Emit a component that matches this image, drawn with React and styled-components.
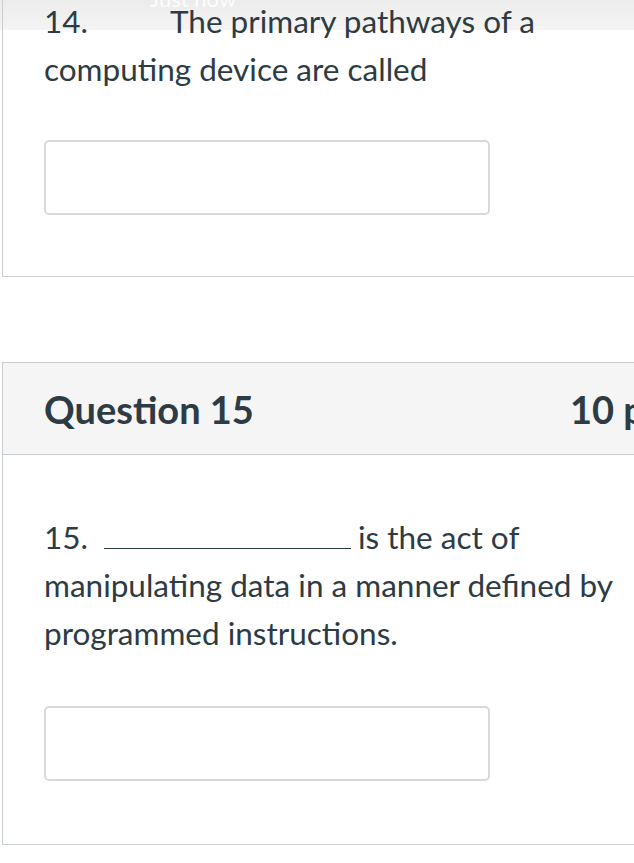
import React from 'react';
import styled, { createGlobalStyle } from 'styled-components';

const GlobalStyle = createGlobalStyle`
    html, body {
        margin: 0;
        padding: 0;
        background: #ffffff;
        overflow: hidden;
    }
    body {
        font-family: Lato, "Noto Sans", "Liberation Sans", sans-serif;
        color: #2d3b45;
    }
`;

const Page = styled.div`
    width: 634px;
    height: 863px;
    overflow: hidden;
    position: relative;
`;

const TopShade = styled.div`
    position: absolute;
    left: 0;
    right: 0;
    top: 0;
    height: 30px;
    background: linear-gradient(#ececec, #f4f4f4);
    z-index: 0;
`;

const Toast = styled.div`
    position: absolute;
    top: -15px;
    left: 150px;
    font-size: 22px;
    color: rgba(255, 255, 255, 0.85);
    z-index: 2;
`;

const Card = styled.div`
    position: relative;
    z-index: 1;
    width: 720px;
    margin-left: 2px;
    border-left: 1px solid #c7cdd1;
    border-bottom: 1px solid #c7cdd1;
    border-top: ${p => (p.$cut ? 'none' : '1px solid #c7cdd1')};
    margin-top: ${p => p.$gap || 0}px;
    background: ${p => (p.$cut ? 'transparent' : '#fff')};
`;

const Header = styled.div`
    height: 91px;
    background: #f5f5f5;
    border-bottom: 1px solid #c7cdd1;
    display: flex;
    align-items: center;
    justify-content: space-between;
    padding: 0 0 0 41px;
`;

const Title = styled.h2`
    margin: 0;
    font-size: 38px;
    font-weight: 700;
    color: #2d3b45;
`;

const Points = styled.span`
    font-size: 38px;
    font-weight: 700;
    color: #2d3b45;
    width: 153px;
`;

const Body = styled.div`
    padding: ${p => p.$top || 0}px 0 0 41px;
    height: ${p => p.$h}px;
    box-sizing: border-box;
`;

const Text = styled.p`
    margin: ${p => p.$mt || 0}px 0 0 0;
    font-size: 31.5px;
    line-height: 48px;
    width: 590px;
    color: #2d3b45;
`;

const Spacer = styled.span`
    display: inline-block;
    width: ${p => p.$w}px;
`;

const Blank = styled.span`
    display: inline-block;
    width: 247px;
    margin: 0 7px 0 16px;
    border-bottom: 1.5px solid #2d3b45;
    height: 32px;
    vertical-align: baseline;
`;

const AnswerBox = styled.div`
    width: 446px;
    height: 75px;
    box-sizing: border-box;
    border: 2px solid #d7dadd;
    border-radius: 5px;
    background: #fff;
    margin-top: ${p => p.$mt}px;
`;

export default function App() {
    return (
        <Page>
            <GlobalStyle />
            <TopShade />
            <Toast>Just now</Toast>
            <Card $cut>
                <Body $h={279}>
                    <Text $mt={-3}>
                        14.<Spacer $w={82} />The primary pathways of a computing device are called
                    </Text>
                    <AnswerBox $mt={47} />
                </Body>
            </Card>
            <Card $gap={85}>
                <Header>
                    <Title>Question 15</Title>
                    <Points>10 pts</Points>
                </Header>
                <Body $top={58} $h={389}>
                    <Text>
                        15.<Blank />is the act of manipulating data in a manner defined by programmed instructions.
                    </Text>
                    <AnswerBox $mt={49} />
                </Body>
            </Card>
        </Page>
    );
}
